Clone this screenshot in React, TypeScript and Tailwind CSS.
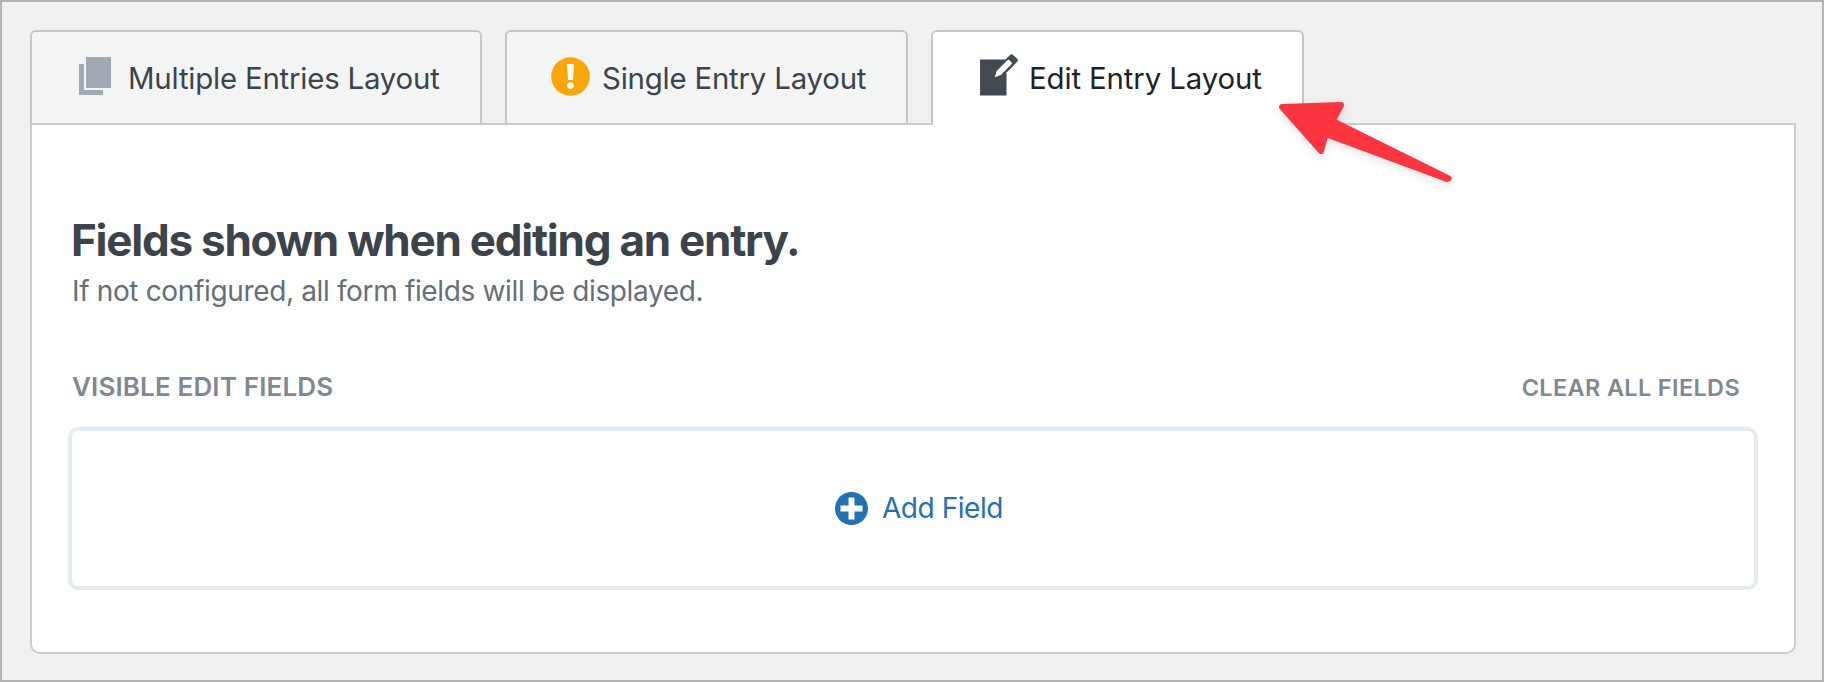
import React from 'react';

const CopyIcon: React.FC = () => (
  <svg width="32" height="38" viewBox="0 0 32 38" fill="#a1aab2">
    <path d="M7 0h25v31H7zM0 7h5v26h19v5H0z" />
  </svg>
);

const WarningIcon: React.FC = () => (
  <svg width="39" height="39" viewBox="0 0 39 39">
    <circle cx="19.5" cy="19.5" r="19.3" fill="#f9a60c" />
    <path d="M16 7h7l-1 16h-5z" fill="#fff" />
    <circle cx="19.5" cy="28.5" r="3.3" fill="#fff" />
  </svg>
);

const EditIcon: React.FC = () => (
  <svg width="39" height="42" viewBox="0 0 39 42" fill="#434a51">
    <path d="M0 5.500H26.500V41.500H0z" />
    <path d="M24.500 6.500L30 1Q31.500 -.3 33 1L37.200 4.800Q38.500 6.200 37.200 7.700L26.500 18.800z" />
    <path d="M27.600 6.100Q28.400 5.400 29.200 6.100L31.700 8.500Q32.400 9.300 31.700 10L20.800 21 14.700 23.300 16.700 17z" fill="#fff" />
  </svg>
);

const PlusIcon: React.FC = () => (
  <svg width="33" height="33" viewBox="0 0 33 33">
    <circle cx="16.5" cy="16.5" r="16.5" fill="#2271b1" />
    <path d="M13.500 5.500h6v8h8v6h-8v8h-6v-8h-8v-6h8z" fill="#fff" />
  </svg>
);

const App: React.FC = () => {
  return (
    <div className="relative h-[682px] w-[1824px] border-2 border-[#b3b3b4] bg-[#f0f0f1] px-7 pt-7 font-[Inter,sans-serif]">
      <div className="relative z-10 flex text-[29.4px] tracking-[-0.2px] text-[#3c434a]">
        <button className="flex h-[93px] w-[452px] rounded-t-md border-2 border-b-0 border-[#c3c6ca] bg-[#f3f5f5] pl-[47px] pt-[25px]">
          <CopyIcon />
          <span className="ml-[17px] whitespace-nowrap">Multiple Entries Layout</span>
        </button>
        <button className="ml-[23px] flex h-[93px] w-[403px] rounded-t-md border-2 border-b-0 border-[#c3c6ca] bg-[#f3f5f5] pl-[44px] pt-[25px]">
          <WarningIcon />
          <span className="ml-3 whitespace-nowrap">Single Entry Layout</span>
        </button>
        <button className="ml-[23px] flex h-[95px] w-[373px] rounded-t-md border-2 border-b-0 border-[#c3c6ca] bg-white pl-[47px] pt-[22px] text-[#1d2327]">
          <EditIcon />
          <span className="ml-[10px] mt-[3px] whitespace-nowrap tracking-[-0.12px]">Edit Entry Layout</span>
        </button>
      </div>

      <main className="-mt-[2px] h-[531px] w-[1766px] rounded-b-[10px] border-2 border-[#c9cdd2] bg-white px-9 pt-[87px]">
        <h1 className="pl-[3px] text-[44px] leading-[56px] font-bold tracking-[-1.24px] text-[#3c434a]">
          Fields shown when editing an entry.
        </h1>
        <p className="pl-1 pt-px text-[28px] leading-[44px] tracking-[-0.35px] text-[#646f79]">
          If not configured, all form fields will be displayed.
        </p>

        <div className="mt-[57px] flex h-[36px] items-center justify-between pl-1 pr-[18px] font-semibold text-[#7e8993]">
          <h2 className="pb-[3px] text-[26px] tracking-[0.15px]">VISIBLE EDIT FIELDS</h2>
          <button className="text-[23.4px] tracking-[0.4px]">CLEAR ALL FIELDS</button>
        </div>

        <div className="mt-[21px] flex h-[163px] w-[1690px] items-center justify-center rounded-[10px] border-4 border-[#e4ebf1] pb-px pl-3">
          <button className="flex items-center gap-[14px] text-[28px] tracking-[-0.45px] text-[#2271b1]">
            <PlusIcon />
            <span>Add Field</span>
          </button>
        </div>
      </main>

      {/* callout arrow over the active tab */}
      <svg
        className="absolute left-[1268px] top-[90px] z-20 drop-shadow-[0_3px_4px_rgba(0,0,0,0.12)]"
        width="200"
        height="110"
        viewBox="1270 92 200 110"
        fill="#fb3640"
        stroke="#fb3640"
        strokeWidth="6"
        strokeLinejoin="round"
      >
        <path d="M1282 107L1341 105 1332.500 121 1448.500 178.500 1447 179 1325.500 134 1321 151z" />
      </svg>
    </div>
  );
};

export default App;
